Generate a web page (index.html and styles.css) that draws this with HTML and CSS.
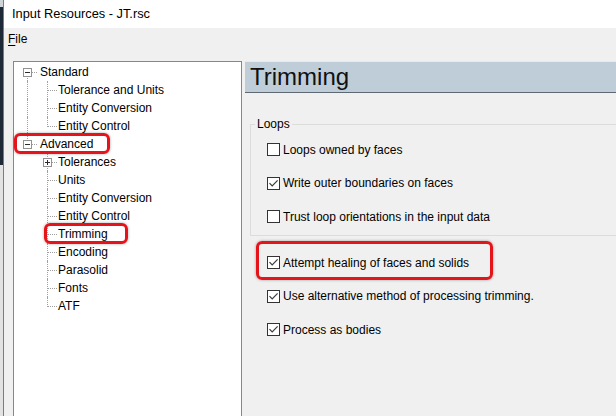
FILE: index.html
```html
<!DOCTYPE html>
<html>
<head>
<meta charset="utf-8">
<link rel="stylesheet" href="styles.css">
</head>
<body>
<div class="screen">
  <div class="desk">
    <div class="desk-top"></div>
    <div class="desk-dark"></div>
    <div class="desk-light"></div>
  </div>
  <div class="window">
    <div class="titlebar">Input Resources - JT.rsc</div>
    <div class="menubar"><span class="menu"><u>F</u>ile</span></div>
    <div class="client">
      <div class="tree">
        <div class="node"><span class="cell c-first"><span class="exp"></span></span><span class="label top">Standard</span></div>
        <div class="node"><span class="cell c-pipe"></span><span class="cell c-tee"></span><span class="label">Tolerance and Units</span></div>
        <div class="node"><span class="cell c-pipe"></span><span class="cell c-tee"></span><span class="label">Entity Conversion</span></div>
        <div class="node"><span class="cell c-pipe"></span><span class="cell c-elbow"></span><span class="label">Entity Control</span></div>
        <div class="node"><span class="cell c-last"><span class="exp"></span></span><span class="label top">Advanced</span></div>
        <div class="node"><span class="cell"></span><span class="cell c-tee"><span class="exp plus"></span></span><span class="label">Tolerances</span></div>
        <div class="node"><span class="cell"></span><span class="cell c-tee"></span><span class="label">Units</span></div>
        <div class="node"><span class="cell"></span><span class="cell c-tee"></span><span class="label">Entity Conversion</span></div>
        <div class="node"><span class="cell"></span><span class="cell c-tee"></span><span class="label">Entity Control</span></div>
        <div class="node"><span class="cell"></span><span class="cell c-tee"></span><span class="label">Trimming</span></div>
        <div class="node"><span class="cell"></span><span class="cell c-tee"></span><span class="label">Encoding</span></div>
        <div class="node"><span class="cell"></span><span class="cell c-tee"></span><span class="label">Parasolid</span></div>
        <div class="node"><span class="cell"></span><span class="cell c-tee"></span><span class="label">Fonts</span></div>
        <div class="node"><span class="cell"></span><span class="cell c-elbow"></span><span class="label">ATF</span></div>
      </div>
      <div class="page">
        <div class="page-head">Trimming</div>
        <fieldset class="group">
          <legend>Loops</legend>
          <div class="opt"><span class="box"></span><span class="opt-text">Loops owned by faces</span></div>
          <div class="opt"><span class="box"><svg viewBox="0 0 11 11" width="11" height="11"><path d="M1.5 5.2 L4.2 8 L9.6 2.4" fill="none" stroke="#3a3a3a" stroke-width="1.2"/></svg></span><span class="opt-text">Write outer boundaries on faces</span></div>
          <div class="opt"><span class="box"></span><span class="opt-text">Trust loop orientations in the input data</span></div>
        </fieldset>
        <div class="opts">
          <div class="opt"><span class="box"><svg viewBox="0 0 11 11" width="11" height="11"><path d="M1.5 5.2 L4.2 8 L9.6 2.4" fill="none" stroke="#3a3a3a" stroke-width="1.2"/></svg></span><span class="opt-text">Attempt healing of faces and solids</span></div>
          <div class="opt"><span class="box"><svg viewBox="0 0 11 11" width="11" height="11"><path d="M1.5 5.2 L4.2 8 L9.6 2.4" fill="none" stroke="#3a3a3a" stroke-width="1.2"/></svg></span><span class="opt-text">Use alternative method of processing trimming.</span></div>
          <div class="opt"><span class="box"><svg viewBox="0 0 11 11" width="11" height="11"><path d="M1.5 5.2 L4.2 8 L9.6 2.4" fill="none" stroke="#3a3a3a" stroke-width="1.2"/></svg></span><span class="opt-text">Process as bodies</span></div>
        </div>
      </div>
    </div>
  </div>
  <div class="mark mark-adv"></div>
  <div class="mark mark-trim"></div>
  <div class="mark mark-heal"></div>
</div>
</body>
</html>
```
FILE: styles.css
```css
* { box-sizing: border-box; }
html, body { margin: 0; padding: 0; }
body {
  font-family: "Liberation Sans", Arial, sans-serif;
  font-size: 12px;
  color: #000;
  background: #f0f0f0;
}
.screen {
  position: relative;
  width: 616px;
  height: 416px;
  overflow: hidden;
  display: flex;
}
.desk {
  width: 3px;
  display: flex;
  flex-direction: column;
  flex: none;
}
.desk-top { height: 7px; background: #cfd4d9; }
.desk-dark { height: 158px; background: #1e2937; }
.desk-light { flex: 1; background: #e2e2e2; }
.window {
  flex: 1;
  display: flex;
  flex-direction: column;
  border-left: 1px solid #7c7c7c;
  background: #f0f0f0;
  min-width: 0;
}
.titlebar {
  height: 28px;
  line-height: 28px;
  padding-left: 8px;
  background: #fff;
  font-size: 12.8px;
}
.menubar {
  height: 22px;
  line-height: 22px;
  padding-left: 4px;
}
.menu u { text-decoration-thickness: 1px; text-underline-offset: 2px; }
.client {
  flex: 1;
  display: flex;
  padding-top: 11px;
  padding-left: 9px;
  min-height: 0;
}
.tree {
  width: 229px;
  height: 420px;
  flex: none;
  background: #fff;
  border: 1px solid #828790;
  padding: 1px 0 0 3px;
}
.node {
  display: flex;
  height: 18px;
}
.cell {
  position: relative;
  width: 20px;
  flex: none;
}
.c-pipe::before, .c-tee::before, .c-elbow::before, .c-first::before, .c-last::before {
  content: "";
  position: absolute;
  left: 10px;
  border-left: 1px dotted #a0a0a0;
}
.c-pipe::before, .c-tee::before { top: 0; bottom: 0; }
.c-elbow::before, .c-last::before { top: 0; height: 10px; }
.c-first::before { top: 9px; bottom: 0; }
.c-tee::after, .c-elbow::after, .c-first::after, .c-last::after {
  content: "";
  position: absolute;
  left: 11px;
  right: 0;
  top: 9px;
  border-top: 1px dotted #a0a0a0;
}
.exp {
  position: absolute;
  left: 6px;
  top: 5px;
  width: 9px;
  height: 9px;
  border: 1px solid #919191;
  background: #fff;
  z-index: 1;
}
.exp::before {
  content: "";
  position: absolute;
  left: 1px;
  top: 3px;
  width: 5px;
  height: 1px;
  background: #2b2b2b;
}
.exp.plus::after {
  content: "";
  position: absolute;
  left: 3px;
  top: 1px;
  width: 1px;
  height: 5px;
  background: #2b2b2b;
}
.label {
  line-height: 18px;
  margin-left: 1px;
  white-space: nowrap;
}
.label.top { margin-left: 3px; }
.page {
  flex: 1;
  margin-left: 3px;
  display: flex;
  flex-direction: column;
  min-width: 0;
}
.page-head {
  height: 32px;
  line-height: 30px;
  background: #bfcdd9;
  border-top: 1px solid #e4eaef;
  border-bottom: 1px solid #5e6872;
  padding-left: 5px;
  font-size: 24px;
  color: #111;
  margin-right: -10px;
}
.group {
  margin: 24px -20px 0 5px;
  padding: 2px 0 1.5px 16px;
  border: 1px solid #dcdcdc;
  min-width: 0;
}
.group legend {
  margin-left: -12px;
  padding: 0 2px;
  line-height: 14px;
}
.opts {
  margin-top: 10px;
  padding-left: 22px;
}
.opt {
  height: 33.5px;
  display: flex;
  align-items: center;
}
.box {
  width: 13px;
  height: 13px;
  border: 1px solid #333;
  background: #fff;
  flex: none;
  display: flex;
}
.opt-text {
  margin-left: 3px;
  white-space: nowrap;
}
.mark {
  position: absolute;
  border: 3px solid #e5141b;
  border-radius: 6px;
  box-shadow: 0 0 3px rgba(0, 0, 0, 0.35);
}
.mark-adv { left: 14px; top: 133px; width: 96px; height: 21px; }
.mark-trim { left: 44px; top: 223px; width: 84px; height: 21px; }
.mark-heal { left: 256px; top: 241px; width: 237px; height: 39px; }
```
